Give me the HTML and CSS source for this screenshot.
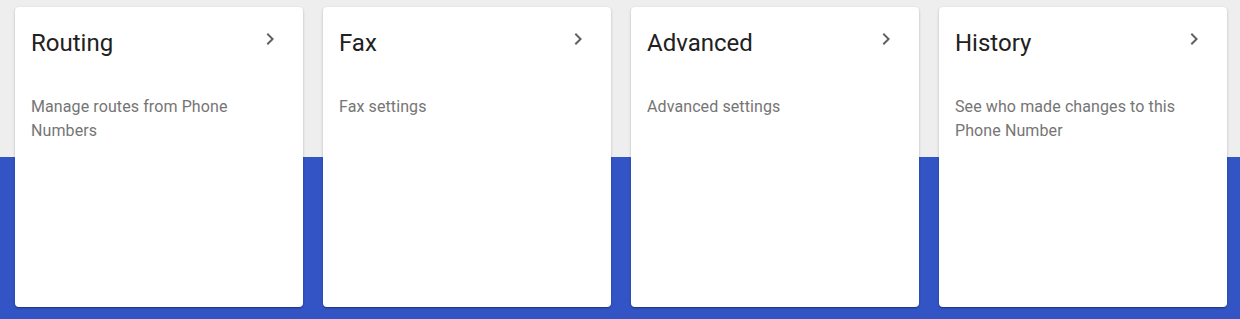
FILE: index.html
```html
<!DOCTYPE html>
<html>
<head>
<meta charset="utf-8">
<link rel="stylesheet" href="styles.css">
</head>
<body>
<div class="page">
  <div class="cards">
    <div class="card">
      <div class="card-head">
        <h2 class="card-title">Routing</h2>
        <svg class="chevron" viewBox="0 0 24 24" width="24" height="24"><path d="M10 6L8.59 7.41 13.17 12l-4.58 4.59L10 18l6-6z"/></svg>
      </div>
      <p class="card-desc">Manage routes from Phone Numbers</p>
    </div>
    <div class="card">
      <div class="card-head">
        <h2 class="card-title">Fax</h2>
        <svg class="chevron" viewBox="0 0 24 24" width="24" height="24"><path d="M10 6L8.59 7.41 13.17 12l-4.58 4.59L10 18l6-6z"/></svg>
      </div>
      <p class="card-desc">Fax settings</p>
    </div>
    <div class="card">
      <div class="card-head">
        <h2 class="card-title">Advanced</h2>
        <svg class="chevron" viewBox="0 0 24 24" width="24" height="24"><path d="M10 6L8.59 7.41 13.17 12l-4.58 4.59L10 18l6-6z"/></svg>
      </div>
      <p class="card-desc">Advanced settings</p>
    </div>
    <div class="card">
      <div class="card-head">
        <h2 class="card-title">History</h2>
        <svg class="chevron" viewBox="0 0 24 24" width="24" height="24"><path d="M10 6L8.59 7.41 13.17 12l-4.58 4.59L10 18l6-6z"/></svg>
      </div>
      <p class="card-desc">See who made changes to this Phone Number</p>
    </div>
  </div>
</div>
</body>
</html>
```
FILE: styles.css
```css
html, body {
  margin: 0;
  padding: 0;
}
body {
  font-family: Roboto, "Liberation Sans", sans-serif;
  width: 1240px;
  height: 319px;
  overflow: hidden;
}
.page {
  height: 319px;
  background: linear-gradient(to bottom, #eeeeee 0, #eeeeee 157px, #3254c5 157px, #3254c5 100%);
  box-sizing: border-box;
  padding: 7px 0 0 15px;
}
.cards {
  display: grid;
  grid-template-columns: repeat(4, 288px);
  column-gap: 20px;
}
.card {
  background: #ffffff;
  border-radius: 4px;
  height: 300px;
  box-sizing: border-box;
  padding: 0 16px;
  box-shadow: 0 1px 3px rgba(0, 0, 0, 0.2), 0 1px 1px rgba(0, 0, 0, 0.14), 0 2px 1px -1px rgba(0, 0, 0, 0.12);
}
.card-head {
  display: flex;
  justify-content: space-between;
  align-items: flex-start;
  padding-top: 20px;
}
.card-title {
  margin: 0;
  font-size: 24px;
  font-weight: 400;
  line-height: 32px;
  color: #212121;
}
.chevron {
  fill: #616161;
  margin-right: 5px;
}
.card-desc {
  margin: 36px 0 0 0;
  font-size: 16px;
  line-height: 24px;
  color: #757575;
  letter-spacing: 0.1px;
}
```
